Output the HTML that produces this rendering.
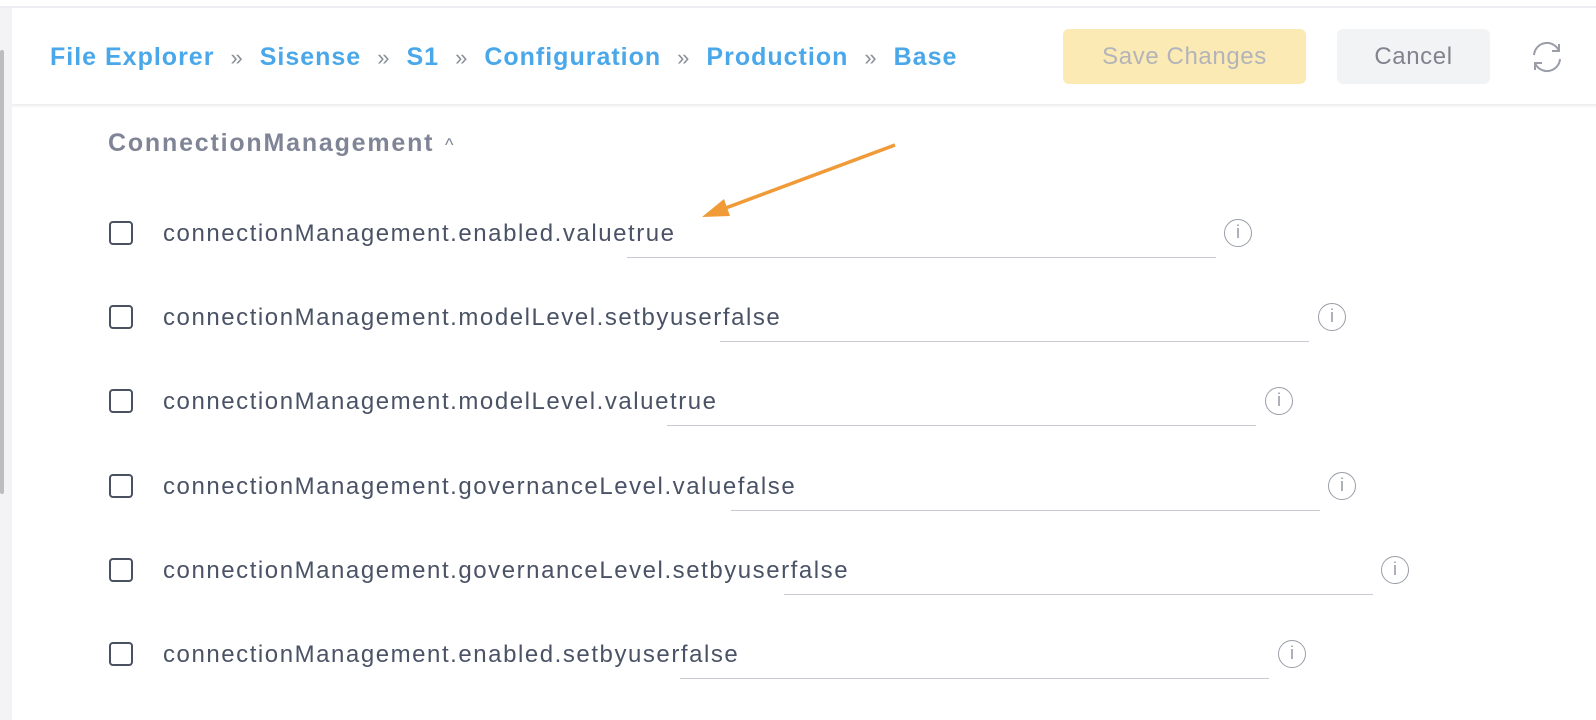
<!DOCTYPE html>
<html><head><style>
body{margin:0;width:1596px;height:720px;background:#fff;font-family:"Liberation Sans",sans-serif;position:relative;overflow:hidden}
.a{position:absolute}
.bc{left:50px;top:43px;font-size:25px;font-weight:bold;color:#4aa8ea;white-space:nowrap;letter-spacing:1px}
.bc s{text-decoration:none;color:#8a8f99;font-weight:normal;margin:0 16px;font-size:22px}
.cb{width:24px;height:24px;border:2px solid #4a5160;border-radius:4px;box-sizing:border-box;left:109px}
.t{left:163px;font-size:24px;letter-spacing:1.55px;color:#4a5366;white-space:nowrap}
.ln{height:1px;background:#c7c9d3;width:589px}
.ic{width:28px;height:28px;border:1.5px solid #9a9ea8;border-radius:50%;box-sizing:border-box;color:#9a9ea8;font-size:18px;text-align:center;line-height:25px}
</style></head><body>
<div class="a" style="left:0;top:0;width:1596px;height:6px;background:#fff;border-bottom:2px solid #eceef3"></div>
<div class="a" style="left:0;top:8px;width:12px;height:712px;background:#f3f3f5"></div>
<div class="a" style="left:0;top:50px;width:4px;height:444px;background:#bdbdbd;border-radius:2px"></div>
<div class="a" style="left:12px;top:104px;width:1584px;height:4px;background:linear-gradient(#ececef,#fff)"></div>
<div class="a bc">File Explorer<s>»</s>Sisense<s>»</s>S1<s>»</s>Configuration<s>»</s>Production<s>»</s>Base</div>
<div class="a" style="left:1063px;top:29px;width:243px;height:55px;background:#fbeab3;border-radius:6px;color:#b2b4ba;font-size:24px;letter-spacing:0.6px;text-align:center;line-height:55px">Save Changes</div>
<div class="a" style="left:1337px;top:29px;width:153px;height:55px;background:#f2f3f5;border-radius:6px;color:#80848e;font-size:24px;letter-spacing:0.6px;text-align:center;line-height:55px">Cancel</div>
<svg class="a" style="left:1530px;top:40px" width="34" height="34" viewBox="0 0 34 34" fill="none" stroke="#9a9ea8" stroke-width="2"><path d="M4 15A13 13 0 0 1 29 11M29 4v7h-7"/><path d="M30 19A13 13 0 0 1 5 23M5 30v-7h7"/></svg>
<div class="a" style="left:108px;top:129px;font-size:25px;letter-spacing:1.8px;font-weight:bold;color:#7f8596">ConnectionManagement <span style="font-weight:normal;font-size:18px;margin-left:2px">^</span></div>
<svg class="a" style="left:0;top:0" width="1596" height="720"><line x1="895" y1="145" x2="715" y2="212" stroke="#f09a38" stroke-width="3.5"/><polygon points="702,217 724,199 730,216" fill="#f09a38"/></svg>

<div class="a cb" style="top:221px"></div><div class="a t" style="top:220px">connectionManagement.enabled.valuetrue</div><div class="a ln" style="left:627px;top:257px"></div><div class="a ic" style="left:1224px;top:219px">i</div>
<div class="a cb" style="top:305px"></div><div class="a t" style="top:304px">connectionManagement.modelLevel.setbyuserfalse</div><div class="a ln" style="left:720px;top:341px"></div><div class="a ic" style="left:1318px;top:303px">i</div>
<div class="a cb" style="top:389px"></div><div class="a t" style="top:388px">connectionManagement.modelLevel.valuetrue</div><div class="a ln" style="left:667px;top:425px"></div><div class="a ic" style="left:1265px;top:387px">i</div>
<div class="a cb" style="top:474px"></div><div class="a t" style="top:473px">connectionManagement.governanceLevel.valuefalse</div><div class="a ln" style="left:731px;top:510px"></div><div class="a ic" style="left:1328px;top:472px">i</div>
<div class="a cb" style="top:558px"></div><div class="a t" style="top:557px">connectionManagement.governanceLevel.setbyuserfalse</div><div class="a ln" style="left:784px;top:594px"></div><div class="a ic" style="left:1381px;top:556px">i</div>
<div class="a cb" style="top:642px"></div><div class="a t" style="top:641px">connectionManagement.enabled.setbyuserfalse</div><div class="a ln" style="left:680px;top:678px"></div><div class="a ic" style="left:1278px;top:640px">i</div>
</body></html>
